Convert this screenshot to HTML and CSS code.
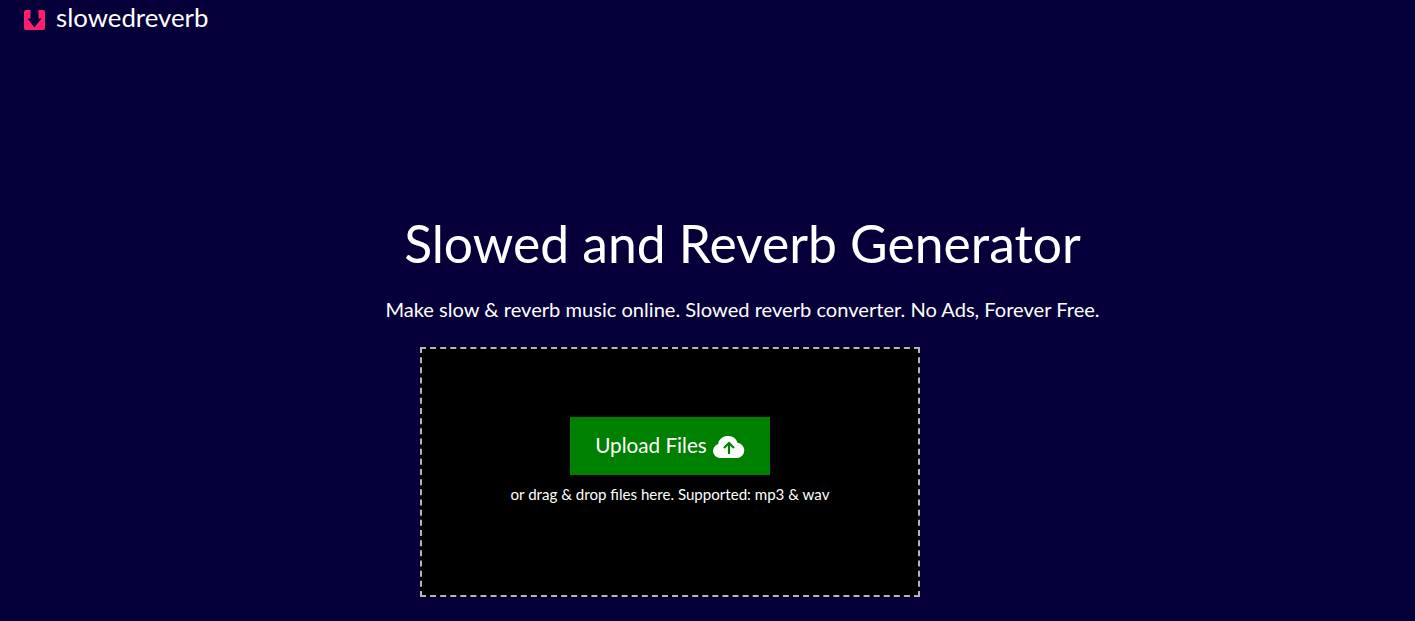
FILE: index.html
```html
<!DOCTYPE html>
<html lang="en">
<head>
<meta charset="utf-8">
<title>Slowed and Reverb Generator</title>
<link rel="stylesheet" href="styles.css">
</head>
<body>
<header class="topbar">
  <a class="brand" href="#">
    <svg class="brand-icon" viewBox="0 0 21 20" aria-hidden="true">
      <path fill="#ff1f6e" d="M2 0h4.500v8.500H3.500L10.500 17.500 17.500 8.500H14.500V0H19a2 2 0 0 1 2 2v16a2 2 0 0 1-2 2H2a2 2 0 0 1-2-2V2a2 2 0 0 1 2-2z"/>
    </svg>
    <span class="brand-name">slowedreverb</span>
  </a>
</header>
<main class="hero">
  <h1 class="title">Slowed and Reverb Generator</h1>
  <p class="subtitle">Make slow &amp; reverb music online. Slowed reverb converter. No Ads, Forever Free.</p>
  <div class="dropzone-row">
    <section class="dropzone">
      <button class="upload" type="button"><span class="upload-label">Upload Files</span>
        <svg class="cloud" viewBox="0 0 32 22" aria-hidden="true">
          <path fill="#fff" d="M7 22A7 7 0 0 1 5 8.300 9.500 9.500 0 0 1 15.500 0a9.700 9.700 0 0 1 9 6.800A7.700 7.700 0 0 1 25 22z"/>
          <path fill="none" stroke="#008000" stroke-width="2.200" d="M16 18V7M11 12l5-5 5 5"/>
        </svg>
      </button>
      <p class="hint">or drag &amp; drop files here. Supported: mp3 &amp; wav</p>
    </section>
  </div>
</main>
</body>
</html>
```
FILE: styles.css
```css
* { box-sizing: border-box; }
html, body { margin: 0; height: 100%; }
body {
  background: #06003a;
  color: #fff;
  font-family: "Lato", "Noto Sans", sans-serif;
  overflow: hidden;
}
.topbar { height: 38px; padding-left: 24px; }
.brand { display: flex; align-items: center; gap: 11px; color: #fff; text-decoration: none; height: 40px; }
.brand-icon { width: 21px; height: 20px; }
.brand-name { font-size: 25.800px; line-height: 36px; margin-bottom: 6px; }
.hero { padding-left: 70px; display: flex; flex-direction: column; }
.title { margin: 174px 0 0; font-size: 51.600px; line-height: 62px; font-weight: 400; text-align: center; }
.subtitle { margin: 21px 0 0; font-size: 20.100px; line-height: 28px; text-align: center; }
.dropzone-row { margin-top: 24px; padding-left: 350px; }
.dropzone {
  width: 500px; height: 250px;
  background: #000;
  border: 2px dashed #b5b5b5;
  padding-top: 68px;
  display: flex; flex-direction: column; align-items: center;
}
.upload {
  width: 200px; height: 58px;
  background: #008000;
  border: 0;
  color: #fff;
  font: 400 20.700px "Lato", "Noto Sans", sans-serif;
  display: flex; align-items: center; justify-content: center; gap: 5px;
}
.upload-label { margin-bottom: 2px; }
.cloud { width: 32px; height: 22px; margin-top: 2px; margin-left: 1px; }
.hint { margin: 9px 0 0; font-size: 15.100px; line-height: 20px; }
```
